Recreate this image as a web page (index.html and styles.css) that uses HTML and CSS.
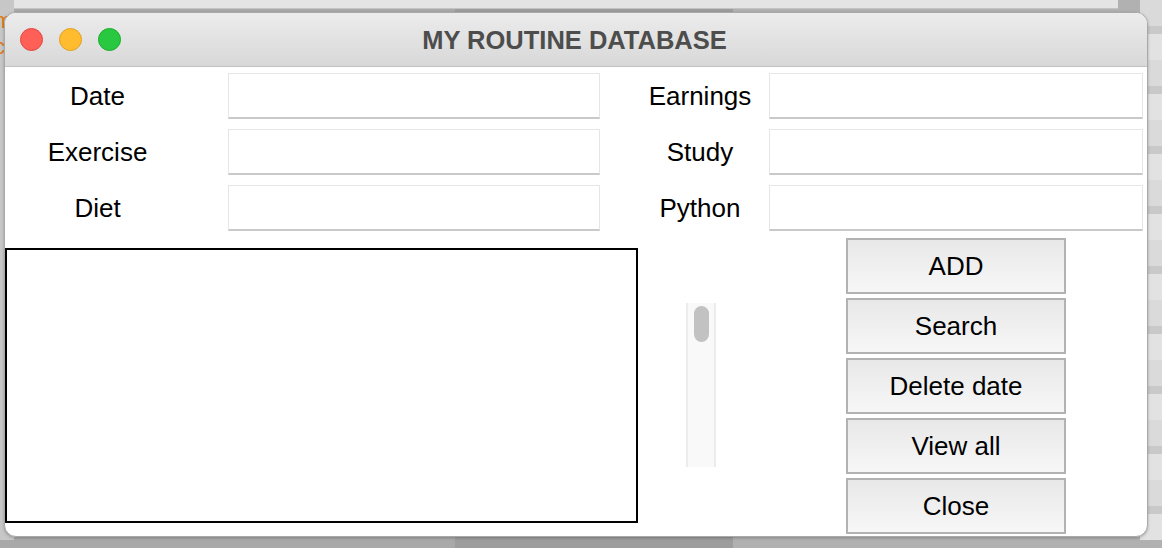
FILE: index.html
```html
<!DOCTYPE html>
<html>
<head>
<meta charset="utf-8">
<title>MY ROUTINE DATABASE</title>
<link rel="stylesheet" href="styles.css">
</head>
<body>
<div class="desktop">
  <div class="bg-top"></div>
  <div class="bg-orange">m<br>c</div>
  <div class="window">
    <div class="titlebar">
      <div class="lights">
        <span class="light red"></span>
        <span class="light yellow"></span>
        <span class="light green"></span>
      </div>
      <div class="title">MY ROUTINE DATABASE</div>
    </div>
    <div class="content">
      <div class="form">
        <label class="lbl lbl-left">Date</label>
        <div class="entry"></div>
        <label class="lbl lbl-right">Earnings</label>
        <div class="entry"></div>
        <label class="lbl lbl-left">Exercise</label>
        <div class="entry"></div>
        <label class="lbl lbl-right">Study</label>
        <div class="entry"></div>
        <label class="lbl lbl-left">Diet</label>
        <div class="entry"></div>
        <label class="lbl lbl-right">Python</label>
        <div class="entry"></div>
      </div>
      <div class="lower">
        <div class="listbox"></div>
        <div class="scrollbar"><div class="thumb"></div></div>
        <div class="buttons">
          <button class="btn">ADD</button>
          <button class="btn">Search</button>
          <button class="btn">Delete date</button>
          <button class="btn">View all</button>
          <button class="btn">Close</button>
        </div>
      </div>
    </div>
  </div>
</div>
</body>
</html>
```
FILE: styles.css
```css
html, body {
  margin: 0;
  padding: 0;
  width: 1162px;
  height: 548px;
  overflow: hidden;
  font-family: "Liberation Sans", Arial, sans-serif;
}
.desktop {
  position: relative;
  width: 1162px;
  height: 548px;
  background:
    linear-gradient(to right, #a9a9a9 0 455px, #9d9d9d 455px 733px, #b1b1b1 733px);
}
.desktop::before {
  content: "";
  position: absolute;
  left: 1140px;
  top: 0;
  width: 22px;
  height: 540px;
  background: repeating-linear-gradient(to bottom, #dadada 0 26px, #c9c9c9 26px 34px, #e2e2e2 34px 60px);
}
.desktop::after {
  content: "";
  position: absolute;
  left: 0;
  top: 0;
  width: 14px;
  height: 540px;
  background: #c7c7c7;
}
.bg-top {
  position: absolute;
  left: 0;
  top: 0;
  width: 1118px;
  height: 8px;
  background: #e4e4e4;
  border-bottom: 1px solid #c4c4c4;
}
.bg-orange {
  position: absolute;
  left: -6px;
  top: 8px;
  font-size: 22px;
  line-height: 26px;
  color: #e07a10;
  z-index: 1;
}
.window {
  position: absolute;
  left: 4px;
  top: 12px;
  width: 1142px;
  height: 523px;
  background: #fff;
  border: 1px solid #a9a9a9;
  border-radius: 12px;
  overflow: hidden;
  z-index: 2;
  box-shadow: 0 1px 3px rgba(0,0,0,0.25);
}
.titlebar {
  position: relative;
  height: 53px;
  background: linear-gradient(to bottom, #ececec, #d8d8d8);
  border-bottom: 1px solid #c2c2c2;
  display: flex;
  align-items: center;
  justify-content: center;
}
.lights {
  position: absolute;
  left: 15px;
  top: 15px;
  display: flex;
  gap: 16px;
}
.light {
  width: 23px;
  height: 23px;
  border-radius: 50%;
  box-sizing: border-box;
}
.red { background: #fe5f57; border: 1px solid #e2463f; }
.yellow { background: #febc2e; border: 1px solid #e0a123; }
.green { background: #28c840; border: 1px solid #1aab29; }
.title {
  font-weight: bold;
  font-size: 25.5px;
  color: #4d4d4d;
  margin-left: -3px;
  margin-top: 1px;
}
.content {
  padding-top: 6px;
}
.form {
  display: grid;
  grid-template-columns: 223px 372px 169px 374px;
  grid-auto-rows: 46px;
  row-gap: 10px;
}
.lbl {
  display: flex;
  align-items: center;
  justify-content: center;
  font-size: 26px;
  color: #000;
}
.lbl-left { padding-right: 38px; }
.lbl-right { padding-left: 31px; }
.entry {
  box-sizing: border-box;
  background: #fff;
  border: 1px solid #e6e6e6;
  border-bottom: 2px solid #c9c9c9;
}
.lower {
  display: flex;
  align-items: flex-start;
  margin-top: 7px;
}
.listbox {
  box-sizing: border-box;
  width: 633px;
  height: 275px;
  margin-top: 10px;
  border: 2px solid #000;
}
.scrollbar {
  box-sizing: border-box;
  width: 30px;
  height: 164px;
  margin-top: 65px;
  margin-left: 48px;
  background: #f9f9f9;
  border-left: 2px solid #ececec;
  border-right: 2px solid #ececec;
  padding: 3px 0 0 6px;
}
.thumb {
  width: 15px;
  height: 36px;
  border-radius: 8px;
  background: #c2c2c2;
}
.buttons {
  display: flex;
  flex-direction: column;
  gap: 4px;
  margin-left: 130px;
}
.btn {
  box-sizing: border-box;
  width: 220px;
  height: 56px;
  border: 2px solid #b2b2b2;
  background: linear-gradient(to bottom, #e8e8e8, #f7f7f7);
  font-family: "Liberation Sans", Arial, sans-serif;
  font-size: 26px;
  color: #000;
  padding: 0;
  margin: 0;
}
```
